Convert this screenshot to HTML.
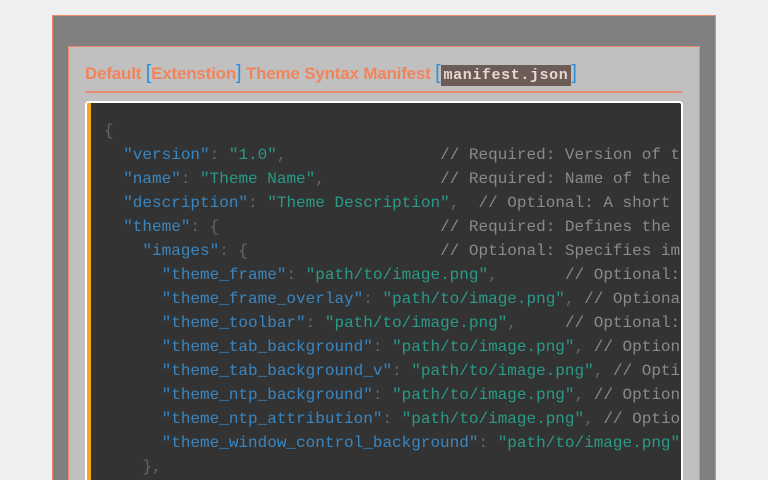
<!DOCTYPE html>
<html><head><meta charset="utf-8"><style>
html,body{margin:0;padding:0;width:768px;height:480px;overflow:hidden;background:#efefef;}
.outer{position:absolute;left:52px;top:15px;width:662px;height:464px;background:#808080;border:1px solid #e98a6a;border-bottom:none;overflow:hidden;}
.inner{position:absolute;left:15px;top:30px;width:630px;height:434px;background:#c0c0c0;border:1px solid #e98a6a;border-bottom:none;overflow:hidden;}
h1{position:absolute;left:16px;top:13px;margin:0;font:bold 17px "Liberation Sans",sans-serif;color:#f2845c;letter-spacing:-0.2px;white-space:nowrap;line-height:26px;}
h1 .b{color:#2e8fdc;font-weight:normal;font-size:20px;}
h1 code{font:bold 15px "Liberation Mono",monospace;background:#6b5c58;color:#e8d8d0;padding:2px 3px;letter-spacing:0.6px;}
.rule{position:absolute;left:16px;top:44px;width:597px;height:2px;background:#e98a6a;}
.code{position:absolute;left:16px;top:54px;width:594px;height:377px;background:#333;border:2px solid #fff;border-bottom:none;border-radius:4px 4px 0 0;overflow:hidden;}
.code::before{content:"";position:absolute;left:0;top:0;bottom:0;width:4px;background:#f0a81c;}
pre{margin:0;position:absolute;left:17px;top:16px;width:577px;height:360px;overflow:hidden;font:16px/24px "Liberation Mono",monospace;color:#777;}
.k{color:#3a86c0}.s{color:#2a9a88}.c{color:#8a8a8a}.p{color:#666}
</style></head><body>
<div class="outer"><div class="inner">
<h1>Default <span class="b">[</span>Extenstion<span class="b">]</span> Theme Syntax Manifest <span class="b">[</span><code>manifest.json</code><span class="b">]</span></h1>
<div class="rule"></div>
<div class="code"><pre><span class="p">{</span>
  <span class="k">"version"</span><span class="p">:</span> <span class="s">"1.0"</span><span class="p">,</span>                <span class="c">// Required: Version of the theme</span>
  <span class="k">"name"</span><span class="p">:</span> <span class="s">"Theme Name"</span><span class="p">,</span>            <span class="c">// Required: Name of the theme</span>
  <span class="k">"description"</span><span class="p">:</span> <span class="s">"Theme Description"</span><span class="p">,</span>  <span class="c">// Optional: A short description</span>
  <span class="k">"theme"</span><span class="p">: {</span>                       <span class="c">// Required: Defines the theme</span>
    <span class="k">"images"</span><span class="p">: {</span>                    <span class="c">// Optional: Specifies images</span>
      <span class="k">"theme_frame"</span><span class="p">:</span> <span class="s">"path/to/image.png"</span><span class="p">,</span>       <span class="c">// Optional: frame</span>
      <span class="k">"theme_frame_overlay"</span><span class="p">:</span> <span class="s">"path/to/image.png"</span><span class="p">,</span> <span class="c">// Optional: overlay</span>
      <span class="k">"theme_toolbar"</span><span class="p">:</span> <span class="s">"path/to/image.png"</span><span class="p">,</span>     <span class="c">// Optional: toolbar</span>
      <span class="k">"theme_tab_background"</span><span class="p">:</span> <span class="s">"path/to/image.png"</span><span class="p">,</span> <span class="c">// Optional: tab</span>
      <span class="k">"theme_tab_background_v"</span><span class="p">:</span> <span class="s">"path/to/image.png"</span><span class="p">,</span> <span class="c">// Optional: tab</span>
      <span class="k">"theme_ntp_background"</span><span class="p">:</span> <span class="s">"path/to/image.png"</span><span class="p">,</span> <span class="c">// Optional: ntp</span>
      <span class="k">"theme_ntp_attribution"</span><span class="p">:</span> <span class="s">"path/to/image.png"</span><span class="p">,</span> <span class="c">// Optional: ntp</span>
      <span class="k">"theme_window_control_background"</span><span class="p">:</span> <span class="s">"path/to/image.png"</span><span class="p">,</span> <span class="c">// Optional</span>
    <span class="p">},</span></pre></div>
</div></div>
</body></html>
